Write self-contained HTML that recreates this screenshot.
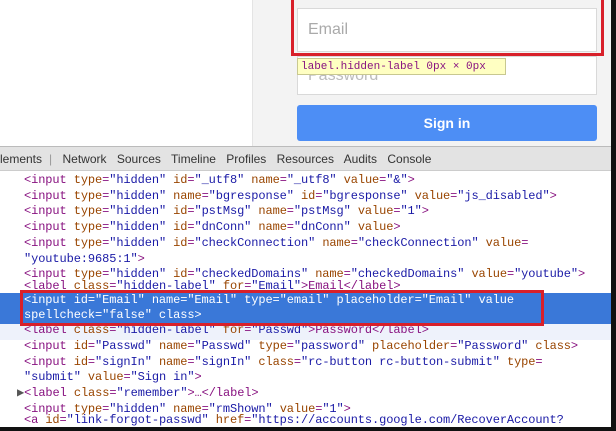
<!DOCTYPE html>
<html><head><style>
*{margin:0;padding:0;box-sizing:border-box}
body{width:616px;height:431px;background:#111;position:relative;overflow:hidden;font-family:"Liberation Sans",sans-serif}
#top{position:absolute;left:0;top:0;width:611px;height:146px;background:#fff}
#panel{position:absolute;left:252px;top:0;width:359px;height:146px;background:#f3f3f3;border-left:1px solid #e4e4e4}
.inp{position:absolute;left:297px;width:300px;background:#fff;border:1px solid #d9d9d9}
#email{top:8px;height:44px;color:#aaa;font-size:16px;padding:12px 10px}
#pw{top:56px;height:39px;color:#bbb;font-size:16px;padding:10px 10px}
#red{position:absolute;left:291px;top:-3px;width:313px;height:59px;border:3px solid #d8202a}
#tip{position:absolute;left:297px;top:58px;width:209px;height:17px;background:#ffffc2;border:1px solid #c8c890;font:11px "Liberation Mono",monospace;color:#881280;padding:2px 3px;white-space:nowrap}
#btn{position:absolute;left:297px;top:105px;width:300px;height:36px;background:#4d8ef5;border-radius:3px;color:#fff;font-weight:bold;font-size:14px;text-align:center;line-height:36px}
#tb{position:absolute;left:0;top:146px;width:611px;height:25px;background:#e3e3e3;border-top:1px solid #bbb;border-bottom:1px solid #ccc;font-size:12px;color:#333;line-height:24px;white-space:nowrap}
#tb span{margin-right:7px}
#code{position:absolute;left:0;top:171px;width:611px;height:256px;background:#fff;font:12px "Liberation Mono",monospace;letter-spacing:-0.1px;white-space:pre;color:#881280;overflow:hidden}
.l{position:absolute;left:24px;height:15.7px;line-height:15.7px}
.a{color:#994500}.v{color:#1a1aa6}
#sel{position:absolute;left:0;top:122px;width:611px;height:31px;background:#3a78d8}
#sel .l{color:#fff}
#hov{position:absolute;left:0;top:153px;width:611px;height:16px;background:#eef2fb}
#red2{position:absolute;left:20px;top:119px;width:524px;height:36px;border:3px solid #d8202a}
</style></head><body>
<div id="top"></div><div id="panel"></div>
<div class="inp" id="email">Email</div>
<div class="inp" id="pw">Password</div>
<div id="red"></div>
<div id="tip">label.hidden-label 0px × 0px</div>
<div id="btn">Sign in</div>
<div id="tb"><span>lements</span><span style="color:#999">|</span> <span>Network</span> <span>Sources</span> <span>Timeline</span> <span>Profiles</span> <span>Resources</span> <span>Audits</span> <span>Console</span></div>
<div id="code">
<div id="sel"></div><div id="hov"></div>
<div class="l" style="top:2px">&lt;input <span class="a">type</span>=<span class="v">"hidden"</span> <span class="a">id</span>=<span class="v">"_utf8"</span> <span class="a">name</span>=<span class="v">"_utf8"</span> <span class="a">value</span>=<span class="v">"&amp;"</span>&gt;</div>
<div class="l" style="top:17.7px">&lt;input <span class="a">type</span>=<span class="v">"hidden"</span> <span class="a">name</span>=<span class="v">"bgresponse"</span> <span class="a">id</span>=<span class="v">"bgresponse"</span> <span class="a">value</span>=<span class="v">"js_disabled"</span>&gt;</div>
<div class="l" style="top:33.4px">&lt;input <span class="a">type</span>=<span class="v">"hidden"</span> <span class="a">id</span>=<span class="v">"pstMsg"</span> <span class="a">name</span>=<span class="v">"pstMsg"</span> <span class="a">value</span>=<span class="v">"1"</span>&gt;</div>
<div class="l" style="top:49.1px">&lt;input <span class="a">type</span>=<span class="v">"hidden"</span> <span class="a">id</span>=<span class="v">"dnConn"</span> <span class="a">name</span>=<span class="v">"dnConn"</span> <span class="a">value</span>&gt;</div>
<div class="l" style="top:64.8px">&lt;input <span class="a">type</span>=<span class="v">"hidden"</span> <span class="a">id</span>=<span class="v">"checkConnection"</span> <span class="a">name</span>=<span class="v">"checkConnection"</span> <span class="a">value</span>=</div>
<div class="l" style="top:80.5px"><span class="v">"youtube:9685:1"</span>&gt;</div>
<div class="l" style="top:96.2px">&lt;input <span class="a">type</span>=<span class="v">"hidden"</span> <span class="a">id</span>=<span class="v">"checkedDomains"</span> <span class="a">name</span>=<span class="v">"checkedDomains"</span> <span class="a">value</span>=<span class="v">"youtube"</span>&gt;</div>
<div class="l" style="top:108px">&lt;label <span class="a">class</span>=<span class="v">"hidden-label"</span> <span class="a">for</span>=<span class="v">"Email"</span>&gt;Email&lt;/label&gt;</div>
<div class="l" style="top:122px;color:#fff">&lt;input id="Email" name="Email" type="email" placeholder="Email" value</div>
<div class="l" style="top:137px;color:#fff">spellcheck="false" class&gt;</div>
<div class="l" style="top:152px">&lt;label <span class="a">class</span>=<span class="v">"hidden-label"</span> <span class="a">for</span>=<span class="v">"Passwd"</span>&gt;Password&lt;/label&gt;</div>
<div class="l" style="top:168px">&lt;input <span class="a">id</span>=<span class="v">"Passwd"</span> <span class="a">name</span>=<span class="v">"Passwd"</span> <span class="a">type</span>=<span class="v">"password"</span> <span class="a">placeholder</span>=<span class="v">"Password"</span> <span class="a">class</span>&gt;</div>
<div class="l" style="top:183.7px">&lt;input <span class="a">id</span>=<span class="v">"signIn"</span> <span class="a">name</span>=<span class="v">"signIn"</span> <span class="a">class</span>=<span class="v">"rc-button rc-button-submit"</span> <span class="a">type</span>=</div>
<div class="l" style="top:199.4px"><span class="v">"submit"</span> <span class="a">value</span>=<span class="v">"Sign in"</span>&gt;</div>
<div class="l" style="top:215.1px;left:17px"><span style="color:#555">▶</span>&lt;label <span class="a">class</span>=<span class="v">"remember"</span>&gt;…&lt;/label&gt;</div>
<div class="l" style="top:230.8px">&lt;input <span class="a">type</span>=<span class="v">"hidden"</span> <span class="a">name</span>=<span class="v">"rmShown"</span> <span class="a">value</span>=<span class="v">"1"</span>&gt;</div>
<div class="l" style="top:242px">&lt;a <span class="a">id</span>=<span class="v">"link-forgot-passwd"</span> <span class="a">href</span>=<span class="v">"https://accounts.google.com/RecoverAccount?</span></div>
<div id="red2"></div>
</div>
</body></html>
